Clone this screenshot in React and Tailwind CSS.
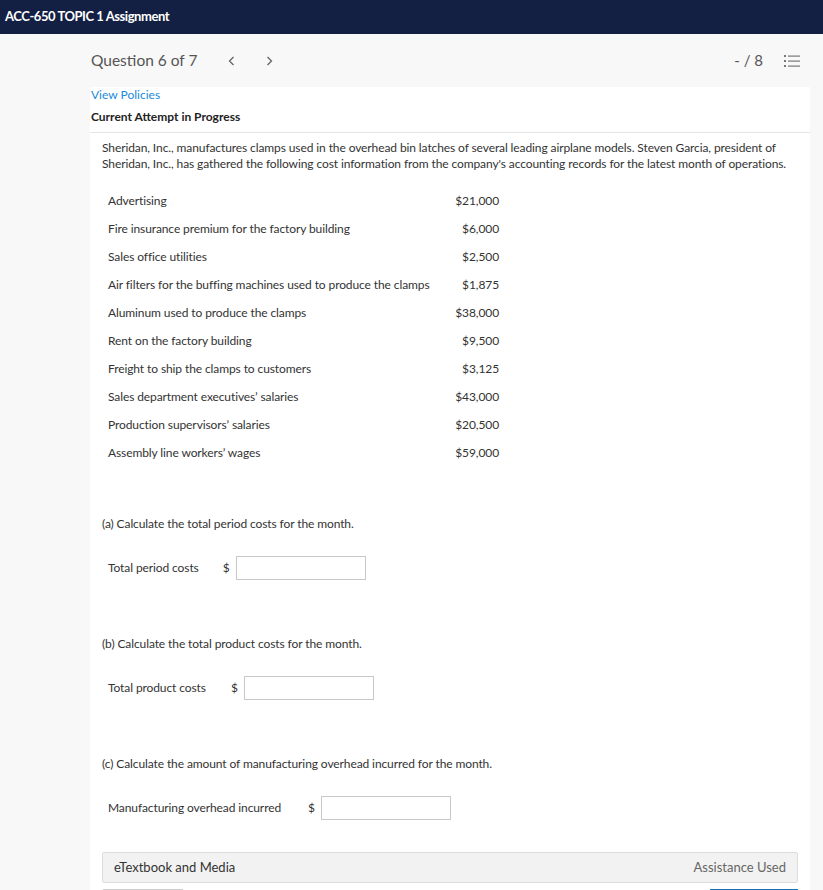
import React from "react";

const rows = [
  ["Advertising", "$21,000"],
  ["Fire insurance premium for the factory building", "$6,000"],
  ["Sales office utilities", "$2,500"],
  ["Air filters for the buffing machines used to produce the clamps", "$1,875"],
  ["Aluminum used to produce the clamps", "$38,000"],
  ["Rent on the factory building", "$9,500"],
  ["Freight to ship the clamps to customers", "$3,125"],
  ["Sales department executives\u2019 salaries", "$43,000"],
  ["Production supervisors\u2019 salaries", "$20,500"],
  ["Assembly line workers\u2019 wages", "$59,000"],
];

function AnswerRow({ label, gap }) {
  return (
    <div className="flex items-center h-[24px] pl-[6px]">
      <span className="text-[12px] text-[#333] tracking-[-0.1px]">{label}</span>
      <span className={`text-[12px] text-[#333] ${gap}`}>$</span>
      <div className="ml-[6px] w-[130px] h-[24px] border border-[#c8c8c8] bg-white" />
    </div>
  );
}

export default function App() {
  return (
    <div className="h-[890px] bg-[#f8f8f8] overflow-hidden" style={{ fontFamily: "Lato, 'Open Sans', sans-serif" }}>
      <div className="h-[34px] bg-[#131f43] flex items-center pl-[5px]">
        <span className="text-white text-[13px] font-bold tracking-[-0.45px]">ACC-650 TOPIC 1 Assignment</span>
      </div>
      <div className="ml-[90px] w-[720px]">
        <div className="h-[53px] flex items-center">
          <span className="text-[15.5px] text-[#555] pl-[1px]">Question 6 of 7</span>
          <svg className="ml-[31px]" width="7" height="10" viewBox="0 0 7 10">
            <polyline points="5.5,1 1.5,5 5.5,9" fill="none" stroke="#666" strokeWidth="1.3" />
          </svg>
          <svg className="ml-[31px]" width="7" height="10" viewBox="0 0 7 10">
            <polyline points="1.5,1 5.5,5 1.5,9" fill="none" stroke="#666" strokeWidth="1.3" />
          </svg>
          <span className="ml-auto text-[15px] text-[#555]">- / 8</span>
          <svg className="ml-[21px] mr-[10px]" width="16" height="14" viewBox="0 0 16 14">
            <g fill="#777">
              <rect x="0" y="1" width="2" height="2" />
              <rect x="0" y="6" width="2" height="2" />
              <rect x="0" y="11" width="2" height="2" />
              <rect x="4" y="1.5" width="12" height="1.2" />
              <rect x="4" y="6.5" width="12" height="1.2" />
              <rect x="4" y="11.5" width="12" height="1.2" />
            </g>
          </svg>
        </div>
        <div className="bg-white pb-[20px]">
          <div className="text-[12px] leading-[16px] text-[#1b8ad8] pl-[1px]">View Policies</div>
          <div className="text-[12px] leading-[16px] font-bold text-[#222] pl-[1px] mt-[6px]">Current Attempt in Progress</div>
          <div className="mt-[7px] border-t border-[#e5e5e5]" />
          <div className="px-[12px] pt-[7px]">
            <p className="text-[12px] leading-[16px] text-[#333] tracking-[-0.1px]">
              Sheridan, Inc., manufactures clamps used in the overhead bin latches of several leading airplane models. Steven Garcia, president of Sheridan, Inc., has gathered the following cost information from the company's accounting records for the latest month of operations.
            </p>
            <div className="mt-[15px] ml-[6px]">
              {rows.map(([l, a]) => (
                <div key={l} className="flex h-[28px] items-center text-[12px] text-[#333] tracking-[-0.1px]">
                  <span className="w-[346px]">{l}</span>
                  <span className="w-[45px] text-right">{a}</span>
                </div>
              ))}
            </div>
            <div className="mt-[49px] text-[12px] leading-[16px] text-[#333] tracking-[-0.1px]">(a) Calculate the total period costs for the month.</div>
            <div className="mt-[24px]">
              <AnswerRow label="Total period costs" gap="ml-[24px]" />
            </div>
            <div className="mt-[56px] text-[12px] leading-[16px] text-[#333] tracking-[-0.1px]">(b) Calculate the total product costs for the month.</div>
            <div className="mt-[24px]">
              <AnswerRow label="Total product costs" gap="ml-[25px]" />
            </div>
            <div className="mt-[56px] text-[12px] leading-[16px] text-[#333] tracking-[-0.1px]">(c) Calculate the amount of manufacturing overhead incurred for the month.</div>
            <div className="mt-[24px]">
              <AnswerRow label="Manufacturing overhead incurred" gap="ml-[27px]" />
            </div>
            <div className="mt-[32px] h-[31px] bg-[#f2f2f2] border border-[#dcdcdc] rounded-[2px] flex items-center justify-between px-[11px]">
              <span className="text-[13px] text-[#333]">eTextbook and Media</span>
              <span className="text-[13px] text-[#666]">Assistance Used</span>
            </div>
            <div className="mt-[6px] flex justify-between">
              <div className="w-[82px] h-[20px] border border-[#ccc] rounded-[2px]" />
              <div className="w-[88px] h-[20px] bg-[#1b6fb5]" />
            </div>
          </div>
        </div>
      </div>
    </div>
  );
}
